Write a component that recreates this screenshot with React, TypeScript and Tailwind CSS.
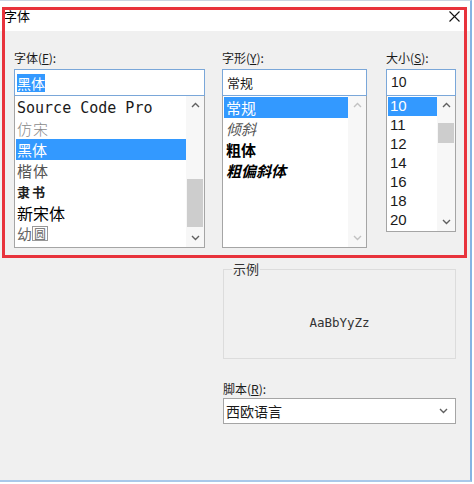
import React from "react";

const cjk = "font-['Noto_Sans_CJK_SC','Noto_Sans',sans-serif]";

const Chevron = ({ up, light }: { up?: boolean; light?: boolean }) => (
  <svg width="9" height="6" viewBox="0 0 9 6" className={up ? "rotate-180" : ""}>
    <path d="M1 1 L4.5 4.5 L8 1" fill="none" stroke={light ? "#c2c2c2" : "#606060"} strokeWidth="1.4" />
  </svg>
);

const Scrollbar = ({ thumbTop, thumbH, light }: { thumbTop?: number; thumbH?: number; light?: boolean }) => (
  <div className="flex flex-col w-[18px] bg-[#f7f7f7]">
    <div className="h-[18px] flex items-center justify-center">
      <Chevron up light={light} />
    </div>
    <div className="flex-1 px-[1px]">
      {thumbH ? <div className="bg-[#cdcdcd]" style={{ marginTop: thumbTop, height: thumbH }} /> : null}
    </div>
    <div className="h-[18px] flex items-center justify-center">
      <Chevron light={light} />
    </div>
  </div>
);

const Label = ({ text, k }: { text: string; k: string }) => (
  <div className={`h-[19px] text-[12px] leading-[15px] text-[#1a1a1a] ${cjk}`}>
    {text}(<span className="underline">{k}</span>):
  </div>
);

const Input = ({ children }: { children: React.ReactNode }) => (
  <div className="h-[27px] border border-[#7aa7d9] bg-white flex items-center px-[2px]">{children}</div>
);

const row = "h-[21px] leading-[20px] flex items-center overflow-hidden";

export default function App() {
  return (
    <div className="relative w-[474px] h-[484px] bg-white overflow-hidden">
      <div className="w-[472px] h-[482px] bg-[#f0f0f0] border-t border-[#c9d6e4] border-r-2 border-b-2 border-r-[#86b4e3] border-b-[#a9c8ea] flex flex-col">
        {/* title bar */}
        <div className="h-[30px] bg-white flex items-center justify-between pl-[4px] pr-[10px]">
          <span className={`text-[13px] text-black ${cjk}`}>字体</span>
          <svg width="11" height="11" viewBox="0 0 11 11">
            <path d="M0.5 0.5 L10.5 10.5 M10.5 0.5 L0.5 10.5" stroke="#111" strokeWidth="1.1" />
          </svg>
        </div>

        {/* selectors */}
        <div className="flex pl-[14px] pt-[19px]">
          <div className="w-[191px] flex flex-col">
            <Label text="字体" k="F" />
            <Input>
              <span className={`text-[14px] leading-[18px] bg-[#3399ff] text-white ${cjk}`}>黑体</span>
            </Input>
            <div className="h-[152px] border border-t-0 border-[#a5a5a5] bg-white flex">
              <div className="flex-1 pt-[1px] pl-[1px] flex flex-col">
                <div className={`${row} pl-[1px] text-[15px] text-[#1a1a1a] font-['DejaVu_Sans_Mono',monospace]`}>
                  Source Code Pro
                </div>
                <div className={`${row} pl-[1px] text-[15px] text-[#8a8a8a] tracking-[1px] font-light ${cjk}`}>仿宋</div>
                <div className={`${row} pl-[1px] text-[15px] text-white bg-[#3399ff] ${cjk}`}>黑体</div>
                <div className={`${row} pl-[1px] text-[15px] text-[#555] tracking-[1px] ${cjk}`}>楷体</div>
                <div className={`${row} pl-[1px] text-[13px] font-bold text-[#222] tracking-[2px] ${cjk}`}>隶书</div>
                <div className={`${row} pl-[1px] text-[16px] text-black ${cjk}`}>新宋体</div>
                <div className={`${row} pl-[1px] text-[15px] text-[#666] ${cjk}`}>
                  幼<span className="border border-[#999] leading-[13px] text-[12px] px-[1px]">圆</span>
                </div>
              </div>
              <Scrollbar thumbTop={65} thumbH={48} />
            </div>
          </div>

          <div className="w-[145px] ml-[17px] flex flex-col">
            <Label text="字形" k="Y" />
            <Input>
              <span className={`text-[13px] text-[#1a1a1a] pl-[2px] ${cjk}`}>常规</span>
            </Input>
            <div className="h-[152px] border border-t-0 border-[#a5a5a5] bg-white flex">
              <div className="flex-1 pt-[1px] pl-[1px] flex flex-col">
                <div className={`${row} pl-[2px] text-[15px] text-white bg-[#3399ff] ${cjk}`}>常规</div>
                <div className={`${row} pl-[2px] text-[15px] italic text-[#555] ${cjk}`}>倾斜</div>
                <div className={`${row} pl-[2px] text-[15px] font-bold text-black ${cjk}`}>粗体</div>
                <div className={`${row} pl-[2px] text-[15px] font-bold italic text-black ${cjk}`}>粗偏斜体</div>
              </div>
              <Scrollbar light />
            </div>
          </div>

          <div className="w-[70px] ml-[19px] flex flex-col">
            <Label text="大小" k="S" />
            <Input>
              <span className="text-[14px] text-[#1a1a1a] pl-[2px] font-['Liberation_Sans',sans-serif]">10</span>
            </Input>
            <div className="h-[136px] border border-t-0 border-[#a5a5a5] bg-white flex">
              <div className="flex-1 pt-[1px] pl-[1px] flex flex-col text-[15px] text-[#1a1a1a] font-['Liberation_Sans',sans-serif]">
                {["10", "11", "12", "14", "16", "18", "20"].map((s, i) => (
                  <div
                    key={s}
                    className={`h-[19px] flex items-center pl-[2px] ${i === 0 ? "bg-[#3399ff] text-white" : ""}`}
                  >
                    {s}
                  </div>
                ))}
              </div>
              <Scrollbar thumbTop={9} thumbH={20} />
            </div>
          </div>
        </div>

        {/* sample + script */}
        <div className="ml-[223px] w-[233px] mt-[21px] flex flex-col">
          <div className="relative h-[90px] border border-[#dcdcdc] flex items-center justify-center">
            <span className={`absolute -top-[9px] left-[8px] px-[1px] bg-[#f0f0f0] text-[13px] leading-[16px] text-[#333] ${cjk}`}>
              示例
            </span>
            <span className="text-[12.5px] text-[#333] font-['DejaVu_Sans_Mono',monospace] pt-[18px]">AaBbYyZz</span>
          </div>
          <div className="mt-[17px] h-[22px]">
            <span className={`text-[12px] leading-[14px] text-[#1a1a1a] ${cjk}`}>
              脚本(<span className="underline">R</span>):
            </span>
          </div>
          <div className="h-[26px] border border-[#a5a5a5] bg-white flex items-center justify-between pl-[2px] pr-[7px]">
            <span className={`text-[14px] text-[#1a1a1a] ${cjk}`}>西欧语言</span>
            <Chevron />
          </div>
        </div>
      </div>

      {/* red annotation frame */}
      <div className="absolute left-[2px] top-[7px] w-[465px] h-[251px] border-[3px] border-[#e8333c] pointer-events-none" />
    </div>
  );
}
